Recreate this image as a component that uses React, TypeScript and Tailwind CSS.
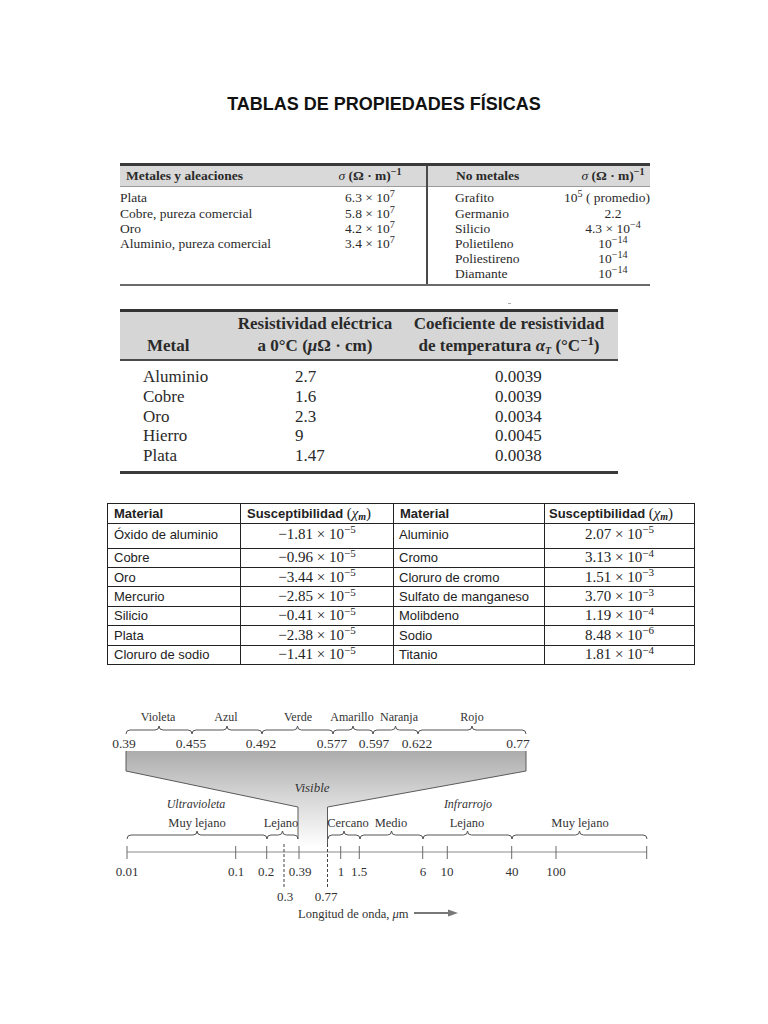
import type { ReactNode } from "react";

const metales = [
  ["Plata", "6.3", "7"],
  ["Cobre, pureza comercial", "5.8", "7"],
  ["Oro", "4.2", "7"],
  ["Aluminio, pureza comercial", "3.4", "7"],
];

const noMetales: [string, ReactNode][] = [
  ["Grafito", <>10<sup>5</sup> ( promedio)</>],
  ["Germanio", "2.2"],
  ["Silicio", <>4.3 × 10<sup>−4</sup></>],
  ["Polietileno", <>10<sup>−14</sup></>],
  ["Poliestireno", <>10<sup>−14</sup></>],
  ["Diamante", <>10<sup>−14</sup></>],
];

const resistividad = [
  ["Aluminio", "2.7", "0.0039"],
  ["Cobre", "1.6", "0.0039"],
  ["Oro", "2.3", "0.0034"],
  ["Hierro", "9", "0.0045"],
  ["Plata", "1.47", "0.0038"],
];

const suscept = [
  ["Óxido de aluminio", "−1.81", "5", "Aluminio", "2.07", "5"],
  ["Cobre", "−0.96", "5", "Cromo", "3.13", "4"],
  ["Oro", "−3.44", "5", "Cloruro de cromo", "1.51", "3"],
  ["Mercurio", "−2.85", "5", "Sulfato de manganeso", "3.70", "3"],
  ["Silicio", "−0.41", "5", "Molibdeno", "1.19", "4"],
  ["Plata", "−2.38", "5", "Sodio", "8.48", "6"],
  ["Cloruro de sodio", "−1.41", "5", "Titanio", "1.81", "4"],
];

function Sigma() {
  return (
    <span className="whitespace-nowrap">
      <i className="font-normal">σ</i> (Ω · m)<sup>−1</sup>
    </span>
  );
}

function Conductividad() {
  return (
    <div className="ml-[120px] w-[530px] flex border-t-[3px] border-b-2 border-t-[#3b3b3b] border-b-[#6b6b6b] font-['Liberation_Serif',serif] text-[13.5px] text-[#2a2a2a]">
      <div className="w-[308px] border-r-2 border-r-[#4a4a4a]">
        <div className="h-[21px] bg-[#d9d9d9] border-b border-b-[#9a9a9a] flex items-center font-bold">
          <span className="flex-1 pl-[6px]">Metales y aleaciones</span>
          <span className="w-[74px] text-center mr-[19px]"><Sigma /></span>
        </div>
        <div className="pt-[4px]">
          {metales.map(([n, v, e]) => (
            <div key={n} className="h-[15.2px] flex items-center">
              <span className="flex-1">{n}</span>
              <span className="w-[74px] mr-[19px] text-center whitespace-nowrap">
                {v} × 10<sup>{e}</sup>
              </span>
            </div>
          ))}
        </div>
      </div>
      <div className="flex-1">
        <div className="h-[21px] bg-[#d9d9d9] border-b border-b-[#9a9a9a] flex items-center font-bold">
          <span className="flex-1 pl-[28px]">No metales</span>
          <span className="w-[74px] text-center"><Sigma /></span>
        </div>
        <div className="pt-[4px] pb-[2px]">
          {noMetales.map(([n, v], i) => (
            <div key={n} className="h-[15.2px] flex items-center">
              <span className="flex-1 pl-[27px]">{n}</span>
              <span className={`w-[74px] flex whitespace-nowrap ${i === 0 ? "justify-end" : "justify-center"}`}>
                <span>{v}</span>
              </span>
            </div>
          ))}
        </div>
      </div>
    </div>
  );
}

function Resistividad() {
  return (
    <div className="ml-[120px] w-[498px] border-t-[3px] border-b-[3px] border-t-[#333333] border-b-[#3a3a3a] font-['Liberation_Serif',serif] text-[17px] text-[#2a2a2a]">
      <div className="h-[49px] bg-[#d6d6d6] border-b-2 border-b-[#4a4a4a] flex font-bold leading-[22px] pt-[1px]">
        <div className="w-[110px] pl-[27px] pt-[22px]">Metal</div>
        <div className="w-[170px] text-center">
          <div>Resistividad eléctrica</div>
          <div>a 0°C (<i>μ</i>Ω · cm)</div>
        </div>
        <div className="flex-1 text-center">
          <div>Coeficiente de resistividad</div>
          <div>
            de temperatura <i>α<sub className="text-[10px]">T</sub></i> (°C<sup>−1</sup>)
          </div>
        </div>
      </div>
      <div className="pt-[6px] pb-[5px]">
        {resistividad.map(([m, r, c]) => (
          <div key={m} className="h-[19.7px] flex items-center">
            <span className="w-[110px] pl-[23px]">{m}</span>
            <span className="w-[170px] pl-[65px]">{r}</span>
            <span className="flex-1 pl-[95px]">{c}</span>
          </div>
        ))}
      </div>
    </div>
  );
}

function Chi() {
  return (
    <span className="font-['Liberation_Serif',serif] font-normal text-[15px]">
      (<i>χ</i><sub className="text-[10px]"><i className="font-bold">m</i></sub>)
    </span>
  );
}

function Val({ v, e }: { v: string; e: string }) {
  return (
    <span className="font-['Liberation_Serif',serif] text-[15px] whitespace-nowrap">
      {v} × 10<sup className="text-[11px]">−{e}</sup>
    </span>
  );
}

function Susceptibilidad() {
  const cell = "border-r border-b border-[#222222] flex px-[6px]";
  return (
    <div className="ml-[107px] w-[588px] grid grid-cols-[133px_153px_151px_150px] border-l border-t border-[#222222] font-['Liberation_Sans',sans-serif] text-[13px] text-[#222222] leading-[15px]">
      <div className={`${cell} h-[20px] items-center font-bold`}>Material</div>
      <div className={`${cell} h-[20px] items-center font-bold whitespace-nowrap`}>
        Susceptibilidad&nbsp;<Chi />
      </div>
      <div className={`${cell} h-[20px] items-center font-bold`}>Material</div>
      <div className={`${cell} h-[20px] items-center font-bold whitespace-nowrap !px-[4px]`}>
        Susceptibilidad&nbsp;<Chi />
      </div>
      {suscept.map(([a, av, ae, b, bv, be], i) => {
        const h = i === 0 ? "h-[25px] items-start pt-[3px]" : "h-[19.4px] items-center";
        return (
          <div key={a} className="contents">
            <div className={`${cell} ${h}`}>{a}</div>
            <div className={`${cell} ${h} justify-center`}><Val v={av} e={ae} /></div>
            <div className={`${cell} ${h} !pl-[5px]`}>{b}</div>
            <div className={`${cell} ${h} justify-center`}><Val v={bv} e={be} /></div>
          </div>
        );
      })}
    </div>
  );
}

function brace(x1: number, x2: number, y: number, h: number) {
  const m = (x1 + x2) / 2;
  const r = Math.min(4, (x2 - x1) / 6);
  return `M${x1} ${y + h} Q${x1} ${y} ${x1 + r} ${y} L${m - r} ${y} Q${m} ${y} ${m} ${y - h} Q${m} ${y} ${m + r} ${y} L${x2 - r} ${y} Q${x2} ${y} ${x2} ${y + h}`;
}

const topBraces = [126, 192, 262, 333, 373, 418, 526];
const topLabels: [string, number][] = [
  ["Violeta", 158], ["Azul", 226], ["Verde", 298], ["Amarillo", 352], ["Naranja", 399], ["Rojo", 472],
];
const topNums: [string, number][] = [
  ["0.39", 124], ["0.455", 191], ["0.492", 261], ["0.577", 332], ["0.597", 374], ["0.622", 417], ["0.77", 518],
];
const lowBraces: [number, number][] = [
  [127, 267], [267, 298], [328, 360], [360, 423], [423, 512], [512, 647],
];
const lowLabels: [string, number][] = [
  ["Muy lejano", 197], ["Lejano", 281], ["Cercano", 348], ["Medio", 391], ["Lejano", 467], ["Muy lejano", 580],
];
const ticks = [127, 235.7, 266.7, 299, 340.7, 359.3, 422.7, 447.3, 511.7, 556, 646.7];
const axisNums: [string, number][] = [
  ["0.01", 127], ["0.1", 236], ["0.2", 266], ["0.39", 300], ["1", 341], ["1.5", 359],
  ["6", 423], ["10", 447], ["40", 512], ["100", 556],
];

function Espectro() {
  const ink = "#333333";
  return (
    <svg width="768" height="240" viewBox="0 700 768 240" className="block" fontFamily="'Liberation Serif', serif">
      <defs>
        <linearGradient id="fun" x1="0" y1="752" x2="0" y2="848" gradientUnits="userSpaceOnUse">
          <stop offset="0" stopColor="#acacac" />
          <stop offset="0.45" stopColor="#d4d4d4" />
          <stop offset="1" stopColor="#ffffff" />
        </linearGradient>
      </defs>

      {topLabels.map(([t, x]) => (
        <text key={t} x={x} y={722} fontSize="12" textAnchor="middle" fill={ink}>{t}</text>
      ))}
      {topBraces.slice(0, -1).map((x, i) => (
        <path key={x} d={brace(x, topBraces[i + 1], 731, 4)} fill="none" stroke="#555" strokeWidth="1" />
      ))}
      {topNums.map(([t, x]) => (
        <text key={t} x={x} y={749} fontSize="13.5" textAnchor="middle" fill={ink}>{t}</text>
      ))}

      <polygon points="126,752 526,752 526,772 327,808 327,848 298,848 298,808 126,772" fill="url(#fun)" />
      <polyline points="126,752 126,772 298,808 298,840" fill="none" stroke="#5a5a5a" strokeWidth="1" />
      <polyline points="526,752 526,772 327.5,808 327.5,845" fill="none" stroke="#5a5a5a" strokeWidth="1" />

      <text x={312} y={793} fontSize="13" fontStyle="italic" textAnchor="middle" fill={ink}>Visible</text>
      <text x={196} y={809} fontSize="12" fontStyle="italic" textAnchor="middle" fill={ink}>Ultravioleta</text>
      <text x={468} y={809} fontSize="12" fontStyle="italic" textAnchor="middle" fill={ink}>Infrarrojo</text>
      {lowLabels.map(([t, x]) => (
        <text key={t + x} x={x} y={828} fontSize="12.5" textAnchor="middle" fill={ink}>{t}</text>
      ))}
      {lowBraces.map(([a, b]) => (
        <path key={a} d={brace(a, b, 836, 4)} fill="none" stroke="#555" strokeWidth="1" />
      ))}

      <line x1={127} y1={853} x2={647} y2={853} stroke="#8a8a8a" strokeWidth="1" />
      {ticks.map((x) => (
        <line key={x} x1={x} y1={847} x2={x} y2={860} stroke="#6a6a6a" strokeWidth="1" />
      ))}
      <line x1={284} y1={845} x2={284} y2={890} stroke="#444" strokeWidth="1" strokeDasharray="3 2" />
      <line x1={327.5} y1={845} x2={327.5} y2={890} stroke="#444" strokeWidth="1" strokeDasharray="3 2" />
      {axisNums.map(([t, x]) => (
        <text key={t} x={x} y={876.5} fontSize="13" textAnchor="middle" fill={ink}>{t}</text>
      ))}
      <text x={285} y={901.5} fontSize="13" textAnchor="middle" fill={ink}>0.3</text>
      <text x={326} y={901.5} fontSize="13" textAnchor="middle" fill={ink}>0.77</text>

      <text x={298} y={919} fontSize="12.5" fill={ink}>
        Longitud de onda, <tspan fontStyle="italic">μ</tspan>m
      </text>
      <line x1={414} y1={914} x2={450} y2={914} stroke="#777" strokeWidth="2" />
      <polygon points="448,910.5 458,914 448,917.5" fill="#777" />
    </svg>
  );
}

export default function App() {
  return (
    <div className="w-[768px] min-h-[1024px] bg-white">
      <h1 className="pt-[92px] h-[116px] leading-[24px] text-center font-['Liberation_Sans',sans-serif] font-bold text-[18px] text-[#111111]">
        TABLAS DE PROPIEDADES FÍSICAS
      </h1>
      <div className="mt-[47px]">
        <Conductividad />
      </div>
      <div className="h-[23px]">
        <span className="block ml-[508px] pt-[17px]">
          <span className="block w-[3px] h-[1px] bg-[#aaaaaa]" />
        </span>
      </div>
      <Resistividad />
      <div className="mt-[29px]">
        <Susceptibilidad />
      </div>
      <div className="mt-[34px]">
        <Espectro />
      </div>
    </div>
  );
}
